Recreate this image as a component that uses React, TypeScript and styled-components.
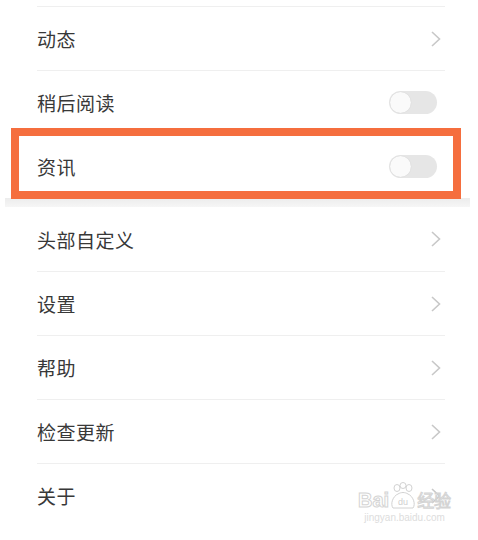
import React from 'react';
import styled, {createGlobalStyle} from 'styled-components';

const GlobalStyle = createGlobalStyle`
	html, body {
		margin: 0;
		padding: 0;
		background: #fff;
	}
	body {
		font-family: "Noto Sans CJK SC", "Noto Sans", sans-serif;
	}
`;

const Page = styled.div`
	position: relative;
	width: 478px;
	height: 540px;
	overflow: hidden;
	background: #fff;
	padding-top: 6px;
	box-sizing: border-box;
`;

const Section = styled.div`
	position: relative;
`;

const Row = styled.div<{$first?: boolean}>`
	display: flex;
	align-items: center;
	justify-content: space-between;
	height: 64px;
	margin: 0 33px 0 37px;
	border-top: ${(p) => (p.$first ? 'none' : '1px solid #efefef')};
	box-sizing: border-box;
`;

const Label = styled.span`
	font-size: 19px;
	color: #383838;
	letter-spacing: 0.5px;
`;

const Chevron = styled.svg`
	width: 12px;
	height: 18px;
	margin-right: 3px;
`;

const Toggle = styled.div`
	position: relative;
	width: 48px;
	height: 23px;
	border-radius: 12px;
	background: #e6e6e6;
	margin-right: 8px;
`;

const Knob = styled.div`
	position: absolute;
	left: 1px;
	top: 1px;
	width: 21px;
	height: 21px;
	border-radius: 50%;
	background: #fafafa;
	box-shadow: 0 0 1px rgba(0, 0, 0, 0.15);
`;

const Gap = styled.div`
	height: 9px;
	margin: 0 8px 0 5px;
	background: linear-gradient(#ececec, #f6f6f6);
`;

const Highlight = styled.div`
	position: absolute;
	top: 122px;
	left: 11px;
	right: 17px;
	bottom: -1px;
	border: 8px solid #f56e3e;
	pointer-events: none;
`;

const Watermark = styled.div`
	position: absolute;
	left: 358px;
	top: 482px;
	display: flex;
	flex-direction: column;
	align-items: center;
	color: #dcdcdc;
`;

const MarkLine = styled.div`
	display: flex;
	align-items: flex-end;
	gap: 1px;
`;

const MarkWord = styled.span`
	font-family: "Liberation Sans", sans-serif;
	font-size: 20px;
	font-weight: bold;
	line-height: 20px;
	color: transparent;
	-webkit-text-stroke: 1px #d4d4d4;
`;

const MarkCn = styled(MarkWord)`
	font-family: "Noto Sans CJK SC", sans-serif;
	font-size: 17px;
	font-weight: normal;
`;

const MarkUrl = styled.span`
	font-family: "Liberation Sans", sans-serif;
	font-size: 10px;
	color: #dddddd;
	margin-top: 2px;
`;

const Arrow = () => (
	<Chevron viewBox="0 0 12 18">
		<path d="M2 2 L9.5 9 L2 16" fill="none" stroke="#c8c8c8" strokeWidth="1.6" />
	</Chevron>
);

const Switch = () => (
	<Toggle>
		<Knob />
	</Toggle>
);

const Paw = () => (
	<svg width="26" height="28" viewBox="0 0 26 28">
		<g fill="none" stroke="#d2d2d2" strokeWidth="1">
			<ellipse cx="7" cy="6" rx="3" ry="3.5" />
			<ellipse cx="13" cy="3.5" rx="3" ry="3" />
			<ellipse cx="19" cy="6" rx="3" ry="3.5" />
			<path d="M3 26 C0 22 3 14 8 12 C11 10 15 10 18 12 C23 14 26 22 23 26 Z" />
		</g>
		<text x="13" y="23" textAnchor="middle" fontSize="9" fontFamily="Liberation Sans, sans-serif" fill="#cfcfcf">
			du
		</text>
	</svg>
);

const App = () => (
	<Page>
		<GlobalStyle />
		<Section>
			<Row>
				<Label>动态</Label>
				<Arrow />
			</Row>
			<Row>
				<Label>稍后阅读</Label>
				<Switch />
			</Row>
			<Row>
				<Label>资讯</Label>
				<Switch />
			</Row>
			<Highlight />
		</Section>
		<Gap />
		<Section>
			{['头部自定义', '设置', '帮助', '检查更新', '关于'].map((name, i) => (
				<Row key={name} $first={i === 0}>
					<Label>{name}</Label>
					<Arrow />
				</Row>
			))}
		</Section>
		<Watermark>
			<MarkLine>
				<MarkWord>Bai</MarkWord>
				<Paw />
				<MarkCn>经验</MarkCn>
			</MarkLine>
			<MarkUrl>jingyan.baidu.com</MarkUrl>
		</Watermark>
	</Page>
);

export default App;
